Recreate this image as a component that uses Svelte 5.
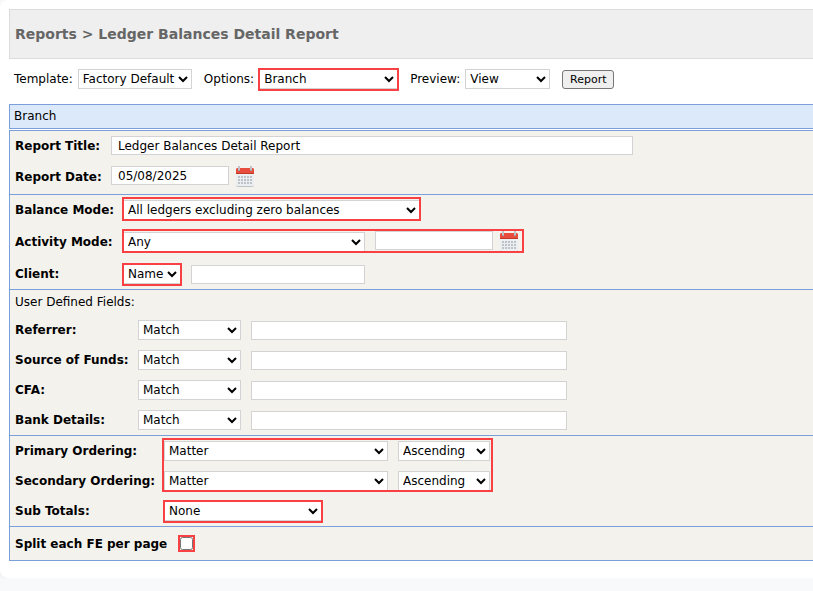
<script lang="ts">
  const userFields = [
    {id: 'referrer', label: 'Referrer:'},
    {id: 'source-of-funds', label: 'Source of Funds:'},
    {id: 'cfa', label: 'CFA:'},
    {id: 'bank-details', label: 'Bank Details:'},
  ];

  const orderings = [
    {id: 'primary', label: 'Primary Ordering:'},
    {id: 'secondary', label: 'Secondary Ordering:'},
  ];

  let reportTitle = $state('Ledger Balances Detail Report');
  let reportDate = $state('05/08/2025');
  let activityDate = $state('');
  let splitPerPage = $state(false);
</script>

{#snippet calendar(label: string)}
  <button type="button" class="calendar" aria-label={label}>
    <svg width="18" height="21" viewBox="0 0 18 21" aria-hidden="true">
      <path fill="#eceff1" d="M0 8h18v11a2 2 0 0 1-2 2H2a2 2 0 0 1-2-2z" />
      <path fill="#bdc3c7" d="M0 18.500c0 1 .8 1.500 2 1.500h14c1.200 0 2-.5 2-1.500a2.300 2.300 0 0 1-2 2.500H2a2.300 2.300 0 0 1-2-2.500z" />
      <path fill="#e74c3c" d="M1 2h16l1 1v5H0V3z" />
      <path fill="#c0392b" d="M0 7h18v1H0z" />
      <path fill="#bdc3c7" d="M2 0h2v5H2zM14 0h2v5h-2z" />
      <path fill="#95a5a6" d="M2 4h2v1H2zM14 4h2v1h-2z" />
      <path
        fill="#bdc3c7"
        d="M2 10h2v2H2zM5 10h2v2H5zM8 10h2v2H8zM11 10h2v2h-2zM14 10h2v2h-2zM2 13h2v2H2zM5 13h2v2H5zM8 13h2v2H8zM11 13h2v2h-2zM14 13h2v2h-2zM2 16h2v2H2zM5 16h2v2H5zM8 16h2v2H8zM11 16h2v2h-2zM14 16h2v2h-2z"
      />
    </svg>
  </button>
{/snippet}

<main class="card">
  <h1>Reports &gt; Ledger Balances Detail Report</h1>

  <div class="toolbar">
    <div class="tool">
      <label for="template">Template:</label>
      <select id="template" class="w-template"><option>Factory Default</option></select>
    </div>
    <div class="tool">
      <label for="options">Options:</label>
      <span class="marked">
        <select id="options" class="w-options"><option>Branch</option></select>
      </span>
    </div>
    <div class="tool">
      <label for="preview">Preview:</label>
      <select id="preview" class="w-preview"><option>View</option></select>
    </div>
    <button type="button" class="report">Report</button>
  </div>

  <h2>Branch</h2>

  <form class="panel">
    <section class="spaced details">
      <div class="row">
        <label for="report-title">Report Title:</label>
        <input id="report-title" type="text" class="w-title" bind:value={reportTitle} />
      </div>
      <div class="row">
        <label for="report-date">Report Date:</label>
        <span class="date">
          <input id="report-date" type="text" class="w-date" bind:value={reportDate} />
          {@render calendar('Pick report date')}
        </span>
      </div>
    </section>

    <section class="spaced modes">
      <div class="row">
        <label for="balance-mode">Balance Mode:</label>
        <span class="marked raised">
          <select id="balance-mode" class="w-balance">
            <option>All ledgers excluding zero balances</option>
          </select>
        </span>
      </div>
      <div class="row">
        <label for="activity-mode">Activity Mode:</label>
        <span class="marked raised activity">
          <select id="activity-mode" class="w-activity"><option>Any</option></select>
          <span class="date">
            <input type="text" class="w-date" aria-label="Activity date" bind:value={activityDate} />
            {@render calendar('Pick activity date')}
          </span>
        </span>
      </div>
      <div class="row">
        <label for="client">Client:</label>
        <span class="marked">
          <select id="client" class="w-name"><option>Name</option></select>
        </span>
        <input type="text" class="w-client" aria-label="Client value" />
      </div>
    </section>

    <section class="user-fields">
      <p>User Defined Fields:</p>
      {#each userFields as field}
        <div class="row">
          <label for={field.id}>{field.label}</label>
          <select id={field.id} class="w-match"><option>Match</option></select>
          <input type="text" class="w-value" aria-label="{field.label} value" />
        </div>
      {/each}
    </section>

    <section class="ordering">
      <div class="order-grid">
        <div>
          {#each orderings as order}
            <div class="row"><label for={order.id}>{order.label}</label></div>
          {/each}
        </div>
        <div class="marked order-fields">
          {#each orderings as order}
            <div class="row">
              <select id={order.id} class="w-order"><option>Matter</option></select>
              <select class="w-direction" aria-label="{order.label} direction">
                <option>Ascending</option>
                <option>Descending</option>
              </select>
            </div>
          {/each}
        </div>
      </div>
      <div class="row">
        <label for="sub-totals">Sub Totals:</label>
        <span class="marked">
          <select id="sub-totals" class="w-totals"><option>None</option></select>
        </span>
      </div>
    </section>

    <section class="split">
      <div class="row">
        <label for="split">Split each FE per page</label>
        <span class="marked tick">
          <input id="split" type="checkbox" bind:checked={splitPerPage} />
        </span>
      </div>
    </section>
  </form>
</main>

<style>
  :global(body) {
    background: #f8f9fb;
    margin: 0;
  }

  .card {
    background: #fff;
    border-radius: 8px 0 0 8px;
    box-shadow: 0 1px 3px rgba(0, 0, 0, 0.06);
    color: #000;
    font: 12px/16px Verdana, "DejaVu Sans", sans-serif;
    padding: 9px 0 17px 9px;
  }

  h1 {
    background: #efefef;
    border: 1px solid #dcdcdc;
    border-right: 0;
    color: #666;
    font-size: 14px;
    line-height: 20px;
    margin: 0;
    padding: 14px 5px 14px;
  }

  h2 {
    background: #dce9fb;
    border: 1px solid #7b9fdb;
    border-right: 0;
    font-size: 12px;
    font-weight: normal;
    line-height: 23px;
    margin: 0 0 1px;
    padding: 0 4px;
  }

  p {
    line-height: 25px;
    margin: 0;
  }

  .toolbar {
    align-items: center;
    display: flex;
    gap: 12px;
    padding: 10px 5px 15px;
  }

  .tool {
    align-items: center;
    display: flex;
    gap: 5px;
  }

  select,
  input[type='text'] {
    background: #fff;
    border: 1px solid #d3d3d3;
    border-radius: 0;
    box-sizing: border-box;
    color: #000;
    font: inherit;
    height: 20px;
    margin: 0;
    padding: 0;
  }

  input[type='text'] {
    height: 19px;
    padding: 0 6px;
  }

  input[type='checkbox'] {
    display: block;
    height: 13px;
    margin: 0;
    width: 13px;
  }

  .report {
    background: #efefef;
    border: 1px solid #767676;
    border-radius: 3px;
    color: #000;
    font: inherit;
    font-size: 11px;
    height: 19px;
    line-height: 17px;
    padding: 0;
    width: 52px;
  }

  .panel {
    border: solid #7b9fdb;
    border-width: 1px 0 0 1px;
  }

  section {
    background: #f4f2ed;
    border-bottom: 1px solid #7b9fdb;
    padding: 0 5px;
  }

  .spaced {
    display: grid;
    gap: 2px;
  }

  .details {
    padding-bottom: 3px;
  }

  .row {
    align-items: center;
    display: flex;
    gap: 10px;
    height: 30px;
  }

  .row label {
    flex: none;
    font-weight: bold;
    white-space: nowrap;
  }

  .details .row { height: 29px; }
  .split .row { height: 33px; }

  .details label { width: 86px; }
  .modes label { width: 98px; }
  .user-fields label { width: 113px; }
  .ordering label { width: 139px; }
  .split label { width: 155px; }

  .date {
    align-items: flex-start;
    display: flex;
    gap: 7px;
  }

  .calendar {
    background: none;
    border: 0;
    cursor: pointer;
    height: 21px;
    padding: 0;
  }

  .calendar svg {
    display: block;
  }

  .order-grid {
    display: flex;
    gap: 10px;
  }

  /* red frame laid over the controls it calls out */
  .marked {
    display: flex;
    position: relative;
  }

  .marked::after {
    border: 2px solid #f94144;
    content: '';
    inset: -1px -1px -2px;
    pointer-events: none;
    position: absolute;
  }

  .marked.raised::after { inset: -3px -1px -1px; }
  .marked.tick::after { inset: -2px; }
  .marked.order-fields::after { inset: 2px -3px 4px -2px; }

  .order-fields {
    flex-direction: column;
  }

  .activity {
    align-items: flex-end;
    gap: 10px;
    height: 20px;
    padding-right: 5px;
  }

  .w-template { width: 114px; }
  .w-options { width: 139px; }
  .w-preview { width: 85px; }
  .w-title { width: 522px; }
  .w-date { width: 118px; }
  .w-balance { width: 297px; }
  .w-activity { width: 242px; }
  .w-name { width: 58px; }
  .w-client { width: 174px; }
  .w-match { width: 103px; }
  .w-value { width: 316px; }
  .w-order { width: 224px; }
  .w-direction { width: 92px; }
  .w-totals { width: 158px; }
</style>
